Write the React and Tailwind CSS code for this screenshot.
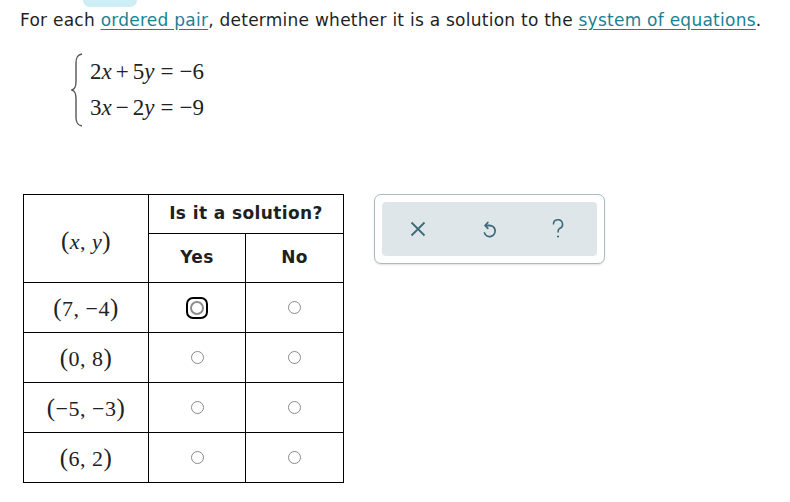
import React from "react";

const serif = { fontFamily: '"Liberation Serif", "Times New Roman", serif' };

function Radio({ selected }) {
    if (selected) {
        return (
            <div className="mx-auto flex h-[22px] w-[22px] items-center justify-center rounded-[7px] border-2 border-black">
                <div className="h-[14px] w-[14px] rounded-full border-2 border-[#8d8d8d] bg-white" />
            </div>
        );
    }
    return <div className="mx-auto h-[13px] w-[13px] rounded-full border border-[#8a8a8a] bg-white" />;
}

function Pair({ children }) {
    return (
        <span className="text-[22px] tracking-[0.5px] text-[#222]" style={serif}>
            <span className="text-[25px]">(</span>
            {children}
            <span className="text-[25px]">)</span>
        </span>
    );
}

const rows = [
    { pair: "7, −4", yes: true },
    { pair: "0, 8" },
    { pair: "−5, −3" },
    { pair: "6, 2" },
];

export default function App() {
    return (
        <div
            className="h-[502px] w-[790px] overflow-hidden bg-white text-[#1f1f1f]"
            style={{ fontFamily: '"DejaVu Sans", Verdana, sans-serif' }}
        >
            {/* peeking tab */}
            <div className="ml-[83px] h-[7px] w-[54px] rounded-b-[8px] bg-[#cdeef4]" />

            {/* Prompt */}
            <p className="ml-5 mt-[3px] text-[17px] leading-[21px] tracking-[0.25px]">
                For each{" "}
                <span className="text-[#1d7f93] underline underline-offset-[3px]">ordered pair</span>,
                determine whether it is a solution to the{" "}
                <span className="text-[#1d7f93] underline underline-offset-[3px]">system of equations</span>.
            </p>

            {/* System */}
            <div className="ml-[71px] mt-[22px] flex items-center">
                <svg width="13" height="74" viewBox="0 0 13 74" className="shrink-0">
                    <path
                        d="M11 1 C6 2 5 5 5 10 L5 28 C5 34 4 36 1 37 C4 38 5 40 5 46 L5 64 C5 69 6 72 11 73"
                        fill="none"
                        stroke="#555"
                        strokeWidth="1.4"
                    />
                </svg>
                <div className="ml-[6px] flex flex-col gap-[12px] text-[23px] leading-[24px] text-[#222]" style={serif}>
                    <div>
                        2<i>x</i>
                        <span className="mx-[4px]">+</span>5<i>y</i>
                        <span className="mx-[6px]">=</span>−6
                    </div>
                    <div>
                        3<i>x</i>
                        <span className="mx-[4px]">−</span>2<i>y</i>
                        <span className="mx-[6px]">=</span>−9
                    </div>
                </div>
            </div>

            {/* Table + tools */}
            <div className="ml-[23px] mt-[67px] flex items-start gap-[30px]">
                <table className="border-collapse border border-black text-center">
                    <tbody>
                        <tr className="h-[39px]">
                            <td rowSpan={2} className="w-[125px] border border-black pt-[4px]">
                                <Pair>
                                    <i>x</i>, <i>y</i>
                                </Pair>
                            </td>
                            <td colSpan={2} className="border border-black text-[17px] font-bold tracking-[0.4px]">
                                Is it a solution?
                            </td>
                        </tr>
                        <tr className="h-[49px]">
                            <td className="w-[97px] border border-black text-[17px] font-bold tracking-[0.4px]">Yes</td>
                            <td className="w-[98px] border border-black text-[17px] font-bold tracking-[0.4px]">No</td>
                        </tr>
                        {rows.map((r, i) => (
                            <tr key={i} className="h-[50px]">
                                <td className="border border-black">
                                    <Pair>{r.pair}</Pair>
                                </td>
                                <td className="border border-black">
                                    <Radio selected={r.yes} />
                                </td>
                                <td className="border border-black">
                                    <Radio />
                                </td>
                            </tr>
                        ))}
                    </tbody>
                </table>

                <div className="w-[231px] rounded-[7px] border border-[#a9bcc3] bg-white p-[7px] shadow-[0_1px_2px_rgba(0,0,0,0.12)]">
                    <div className="flex h-[54px] items-center rounded-[4px] bg-[#dfe6e9] pl-[28px] text-[#3c6b7c]">
                        <svg width="16" height="16" viewBox="0 0 16 16">
                            <path d="M1.5 1.5 L14.5 14.5 M14.5 1.5 L1.5 14.5" stroke="currentColor" strokeWidth="1.8" fill="none" />
                        </svg>
                        <svg width="16" height="18" viewBox="0 0 16 18" className="ml-[55px]">
                            <path
                                d="M5 5.5 L8.5 5.5 A5.5 5.5 0 1 1 3.5 13"
                                stroke="currentColor"
                                strokeWidth="1.8"
                                fill="none"
                                strokeLinecap="round"
                            />
                            <path d="M6.8 2.5 L4.2 5.5 L6.8 8.3" stroke="currentColor" strokeWidth="1.8" fill="none" strokeLinecap="round" />
                        </svg>
                        <svg width="14" height="20" viewBox="0 0 14 20" className="ml-[54px]">
                            <path
                                d="M2.5 5.5 A4.5 4.5 0 1 1 8.5 9.5 C7.2 10.2 7 11 7 13.5"
                                stroke="currentColor"
                                strokeWidth="1.6"
                                fill="none"
                            />
                            <circle cx="7" cy="17.5" r="1.1" fill="currentColor" />
                        </svg>
                    </div>
                </div>
            </div>
        </div>
    );
}
